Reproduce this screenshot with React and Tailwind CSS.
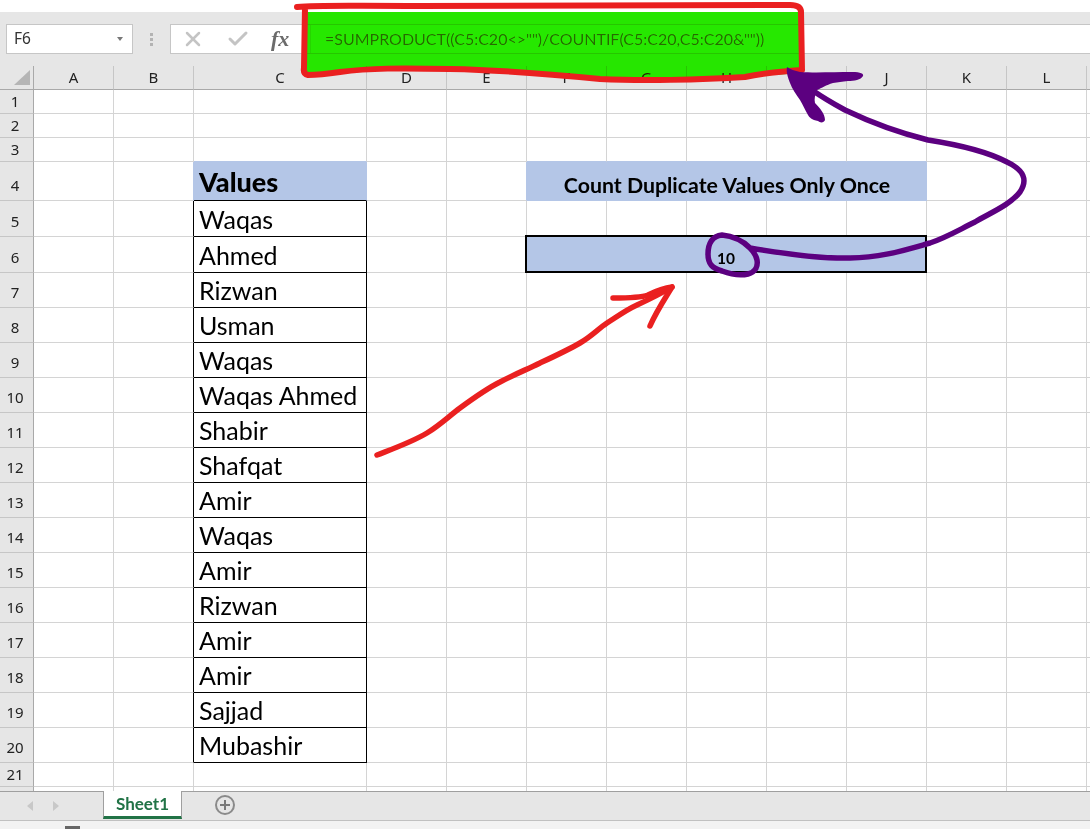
import React from 'react';
import { X, Check } from 'lucide-react';

const COLS = ['A', 'B', 'C', 'D', 'E', 'F', 'G', 'H', 'I', 'J', 'K', 'L', ''];
const VALUES = ['Waqas', 'Ahmed', 'Rizwan', 'Usman', 'Waqas', 'Waqas Ahmed', 'Shabir', 'Shafqat', 'Amir', 'Waqas', 'Amir', 'Rizwan', 'Amir', 'Amir', 'Sajjad', 'Mubashir'];
const ROWS = Array.from({ length: 22 }, (_, i) => i + 1);

const UI_FONT = 'font-["Noto_Sans",sans-serif]';
const CELL_FONT = 'font-["Lato",sans-serif]';

function RowHead({ n }) {
  const tall = n >= 4 && n <= 20;
  return (
    <div className={`${UI_FONT} bg-[#e6e6e6] border-r border-b border-r-[#a9a9a9] border-b-[#c6c6c6] flex items-end justify-center pr-[3px] ${tall ? 'pb-[4px]' : 'pb-px'} text-[15px] leading-[22px] text-[#222]`}>
      {n <= 21 ? n : ''}
    </div>
  );
}

// one worksheet cell, borders depend on where the table sits
function Cell({ row, col }) {
  const inList = col === 2 && row >= 5 && row <= 20;
  const leftOfList = col === 1 && row >= 5 && row <= 20;
  const head = col === 2 && row === 4;
  const aboveHead = col === 2 && row === 3;
  const leftOfHead = col === 1 && row === 4;
  const leftOfTitle = col === 4 && row === 4;
  const aboveTitle = col >= 5 && col <= 9 && row === 3;

  let cls = 'border-r border-b border-[#d4d4d4]';
  if (inList) cls = 'border-r border-b border-black';
  if (leftOfList) cls = 'border-r border-b border-b-[#d4d4d4] border-r-black';
  if (head) cls = 'border-r border-b border-r-[#b4c6e7] border-b-black bg-[#b4c6e7]';
  if (aboveHead) cls = 'border-r border-b border-r-[#d4d4d4] border-b-[#b4c6e7]';
  if (leftOfHead) cls = 'border-r border-b border-r-[#b4c6e7] border-b-[#d4d4d4]';
  if (leftOfTitle) cls = 'border-r border-b border-r-[#b4c6e7] border-b-[#d4d4d4]';
  if (aboveTitle) cls = 'border-r border-b border-r-[#d4d4d4] border-b-[#b4c6e7]';

  return (
    <div className={`${cls} ${CELL_FONT} flex items-end overflow-hidden pl-[5px] text-black`}>
      {head && <span className="font-black text-[27px] leading-[36px]">Values</span>}
      {inList && <span className="text-[25px] leading-[34px] whitespace-nowrap">{VALUES[row - 5]}</span>}
    </div>
  );
}

function Sheet() {
  return (
    <div className="grid grid-cols-[34px_80px_80px_173px_repeat(9,80px)_1fr] grid-rows-[24px_24px_24px_24px_39px_36px_36px_repeat(14,35px)_24px_5px] h-[725px] overflow-hidden bg-white">
      {/* column headers */}
      <div className="bg-[#e6e6e6] border-r border-b border-r-[#a9a9a9] border-b-[#a9a9a9] flex items-end justify-end pr-[3px] pb-[4px]">
        <svg width="16" height="15" viewBox="0 0 16 15"><polygon points="16,0 16,15 0,15" fill="#b5b5b5" /></svg>
      </div>
      {COLS.map((c) => (
        <div key={c || 'end'} className={`${UI_FONT} bg-[#e6e6e6] border-b border-r border-b-[#a9a9a9] border-r-[#c6c6c6] flex items-center justify-center text-[15px] text-[#222]`}>
          {c}
        </div>
      ))}

      {ROWS.map((r) => {
        const cells = [<RowHead key="h" n={r} />];
        for (let c = 0; c < 13; c++) {
          if ((r === 4 || r === 6) && c === 5) {
            cells.push(
              r === 4 ? (
                <div key={c} className={`${CELL_FONT} col-span-5 bg-[#b4c6e7] flex items-end justify-center pb-[2px] font-bold text-[21.3px] leading-[28px] text-black`}>
                  Count Duplicate Values Only Once
                </div>
              ) : (
                <div key={c} className={`${CELL_FONT} col-span-5 relative z-10 -ml-[2px] -mt-[2px] bg-[#b4c6e7] border-2 border-black flex items-end justify-center pb-[4px] font-bold text-[15.5px] leading-[18px] text-black`}>
                  10
                </div>
              )
            );
            c = 9;
          } else {
            cells.push(<Cell key={c} row={r} col={c} />);
          }
        }
        return <React.Fragment key={r}>{cells}</React.Fragment>;
      })}
    </div>
  );
}

function Annotations() {
  return (
    <>
      {/* highlighter, darkens whatever is under it */}
      <svg className="absolute inset-0 z-20 mix-blend-darken pointer-events-none" width="1090" height="829" viewBox="0 0 1090 829" fill="none">
        <path d="M303 12 L800 12 L802 73 L760 76 L700 79 L600 80 L520 73 L450 70 L380 70 L303 75 Z" fill="#26e800" />
      </svg>
      <svg className="absolute inset-0 z-30 pointer-events-none" width="1090" height="829" viewBox="0 0 1090 829" fill="none">
        {/* red box */}
        <path d="M297 7 C320 5 340 6 420 6 L790 5 Q801 5 801 12 L802 70 Q770 72 745 77 C700 80 640 81 600 79 C560 75 500 70 450 69 C400 68 370 68 340 72 Q320 75 308 75 Q303 74 304 68 L305 8" stroke="#ea2020" strokeWidth="6" strokeLinecap="round" strokeLinejoin="round" />
        {/* red arrow */}
        <path d="M377 455 C395 448 412 442 427 433 C440 425 448 417 460 408 C475 397 488 388 500 382 C515 374 528 369 540 363 C555 356 568 350 580 343 C592 336 598 329 607 323 C618 316 626 310 637 305 C650 299 662 293 672 287" stroke="#ea2020" strokeWidth="5.5" strokeLinecap="round" strokeLinejoin="round" />
        <path d="M613 298 C625 298 640 298 648 295 C656 291 663 288 672 287 C664 300 656 312 650 326" stroke="#ea2020" strokeWidth="5.5" strokeLinecap="round" strokeLinejoin="round" />
        {/* purple circle and line */}
        <path d="M750 248 C743 241 733 236 722 235 C712 236 708 244 708 254 C708 264 712 268 722 271 C730 274 740 276 748 274 C756 272 758 266 757 260 C756 255 753 251 750 248 C780 253 820 259 850 258 C880 258 905 250 930 243 C945 238 955 232 975 222 C990 213 1010 205 1020 192 C1028 180 1024 170 1007 162 C990 153 960 145 928 140 C900 133 870 122 845 110 C832 103 822 97 812 90" stroke="#5c0080" strokeWidth="5.5" strokeLinecap="round" strokeLinejoin="round" />
        {/* purple arrow head */}
        <path d="M787 67 C790 69 795 71 800 72 C815 73 835 72 852 72 C861 72 864 74 863 76 C861 80 854 81 848 81 C842 82 838 82 833 83 C826 85 822 88 817 90 C815 95 814 99 815 103 C820 108 825 114 825 120 C824 123 820 123 818 121 C812 120 809 117 808 115 C805 110 803 105 800 100 C796 94 792 89 790 83 C788 78 786 72 787 67 Z" fill="#5c0080" strokeLinejoin="round" />
      </svg>
    </>
  );
}

export default function App() {
  return (
    <div className="relative w-[1090px] h-[829px] overflow-hidden bg-white">
      <div className="h-3 bg-white" />

      {/* formula bar */}
      <div className={`${UI_FONT} h-[54px] bg-[#e6e6e6] flex pt-3 pl-[6px] items-start`}>
        <div className="w-[127px] h-[30px] bg-white border border-[#c6c6c6] flex items-center justify-between pl-[7px] pr-[9px] text-[15.5px] text-[#333]">
          <span>F6</span>
          <span className="w-0 h-0 border-x-[3.5px] border-x-transparent border-t-[4px] border-t-[#777]" />
        </div>
        <div className="w-[37px] h-[30px] flex flex-col items-center justify-center gap-[2px]">
          <span className="w-[3px] h-[3px] bg-[#b3b3b3]" />
          <span className="w-[3px] h-[3px] bg-[#b3b3b3]" />
          <span className="w-[3px] h-[3px] bg-[#b3b3b3]" />
        </div>
        <div className="flex-1 h-[30px] bg-white border border-[#c6c6c6] border-r-0 flex items-center">
          <div className="w-[139px] flex items-center pl-[10px] shrink-0">
            <X size={24} strokeWidth={2.5} className="text-[#c4c4c4]" />
            <Check size={24} strokeWidth={3} className="ml-[21px] text-[#c4c4c4]" />
            <span className='ml-[21px] font-["Liberation_Serif",serif] italic font-bold text-[22px] leading-none text-[#6b6b6b]'>fx</span>
          </div>
          <div className={`${CELL_FONT} flex-1 h-full border-l border-[#d4d4d4] flex items-center pl-[14px] text-[16px] text-[#2f6a2f] whitespace-nowrap`}>
            =SUMPRODUCT((C5:C20&lt;&gt;"")/COUNTIF(C5:C20,C5:C20&amp;""))
          </div>
        </div>
      </div>

      <Sheet />

      {/* sheet tabs */}
      <div className="h-[30px] bg-[#e6e6e6] border-t border-b border-t-[#9f9f9f] border-b-[#c0c0c0] flex items-start">
        <div className="w-[103px] h-full flex items-center pl-[27px] gap-[20px]">
          <span className="w-0 h-0 border-y-[5px] border-y-transparent border-r-[6px] border-r-[#c8c8c8]" />
          <span className="w-0 h-0 border-y-[5px] border-y-transparent border-l-[6px] border-l-[#c8c8c8]" />
        </div>
        <div className={`${CELL_FONT} w-[79px] h-[28px] -mt-px bg-white border-x border-b-[3px] border-x-[#9f9f9f] border-b-[#217346] flex items-center justify-center font-bold text-[17px] text-[#217346]`}>
          Sheet1
        </div>
        <div className="ml-[33px] mt-[3px] w-5 h-5 rounded-full border-2 border-[#8a8a8a] flex items-center justify-center">
          <svg width="12" height="12" viewBox="0 0 12 12"><path d="M6 1v10M1 6h10" stroke="#7a7a7a" strokeWidth="2" /></svg>
        </div>
      </div>

      {/* status bar */}
      <div className="h-[8px] bg-[#f2f2f2] pl-[65px] pt-[5px]">
        <div className="w-[15px] h-[3px] bg-[#666]" />
      </div>

      <Annotations />
    </div>
  );
}
